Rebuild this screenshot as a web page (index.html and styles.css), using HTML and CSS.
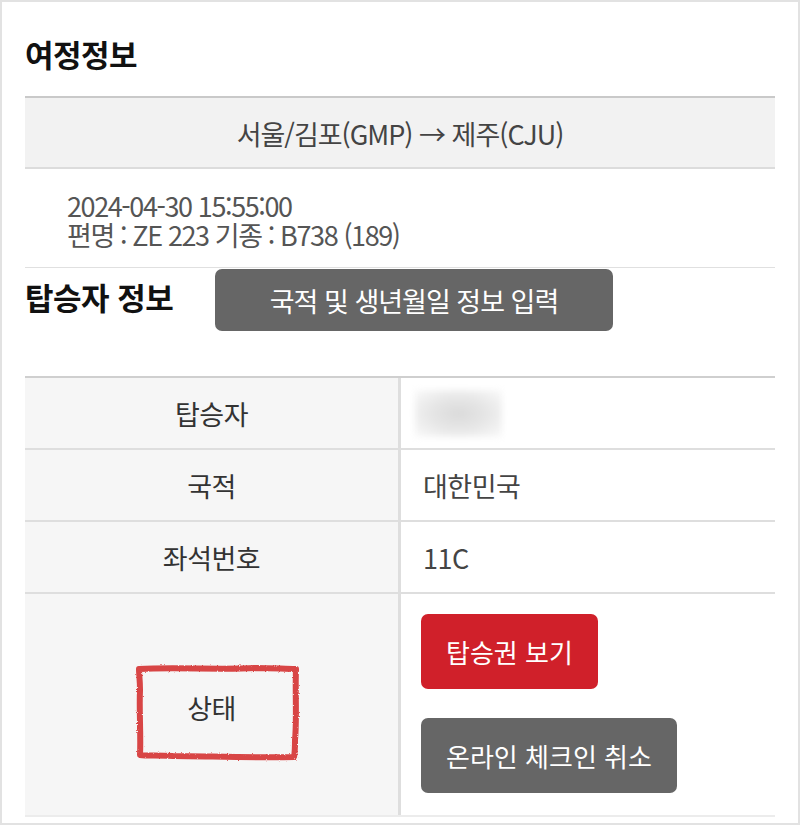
FILE: index.html
```html
<!DOCTYPE html>
<html lang="ko">
<head>
<meta charset="utf-8">
<title>여정정보</title>
<link rel="stylesheet" href="styles.css">
</head>
<body>
<div class="frame">
  <h2 class="section-title trip-title">여정정보</h2>
  <div class="route">서울/김포(GMP) → 제주(CJU)</div>
  <div class="flight">
    <div>2024-04-30 15:55:00</div>
    <div>편명 : ZE 223 기종 : B738 (189)</div>
  </div>
  <div class="pax-head">
    <h2 class="section-title pax-title">탑승자 정보</h2>
    <button class="btn btn-gray btn-info">국적 및 생년월일 정보 입력</button>
  </div>
  <div class="table">
    <div class="cell label">탑승자</div>
    <div class="cell value"><span class="blur"></span></div>
    <div class="cell label">국적</div>
    <div class="cell value">대한민국</div>
    <div class="cell label">좌석번호</div>
    <div class="cell value">11C</div>
    <div class="cell label status">
      상태
      <svg class="mark" width="170" height="105" viewBox="0 0 170 105">
        <defs>
          <filter id="rough" x="-10%" y="-10%" width="120%" height="120%">
            <feTurbulence type="fractalNoise" baseFrequency="0.9" numOctaves="2" seed="3"/>
            <feDisplacementMap in="SourceGraphic" scale="2.4"/>
          </filter>
        </defs>
        <path d="M6 9 C40 7 90 10 122 8 C140 8 152 9 163 9 C162 30 164 60 162 80 C162 88 162 92 161 97 C120 98 70 96 40 96 C25 95 14 96 7 95 C8 75 6 50 7 30 C7 20 6 14 6 9 Z" fill="none" stroke="#d84444" stroke-width="6" stroke-linejoin="round" filter="url(#rough)"/>
      </svg>
    </div>
    <div class="cell actions">
      <button class="btn btn-red btn-act">탑승권 보기</button>
      <button class="btn btn-gray btn-act">온라인 체크인 취소</button>
    </div>
  </div>
</div>
</body>
</html>
```
FILE: styles.css
```css
* { box-sizing: border-box; }
html, body { margin: 0; padding: 0; background: #fff; }
body {
  font-family: "Noto Sans CJK KR", "Noto Sans", sans-serif;
  color: #333;
}
.frame {
  width: 800px;
  height: 825px;
  border: 2px solid #e2e2e2;
  padding: 0 23px;
  overflow: hidden;
}
.section-title {
  margin: 0;
  font-weight: 700;
  color: #111;
  letter-spacing: -0.5px;
}
.trip-title {
  font-size: 31px;
  line-height: 40px;
  margin-top: 32px;
}
.route {
  margin-top: 22px;
  height: 73px;
  padding-top: 5px;
  border-top: 2px solid #c9c9c9;
  border-bottom: 2px solid #dcdcdc;
  background: #f2f2f2;
  text-align: center;
  font-size: 27px;
  line-height: 62px;
  color: #444;
  letter-spacing: -1px;
}
.flight {
  padding: 22px 0 18px 42px;
  font-size: 27px;
  line-height: 29px;
  color: #555;
  letter-spacing: -1.4px;
  border-bottom: 1px solid #e0e0e0;
}
.pax-head {
  display: flex;
  align-items: flex-start;
  padding-top: 1px;
}
.pax-title {
  flex: 0 0 190px;
  font-size: 31px;
  line-height: 40px;
  margin-top: 8px;
}
.btn {
  border: 0;
  color: #fff;
  font-family: inherit;
  border-radius: 7px;
  padding: 0;
  cursor: pointer;
}
.btn-gray { background: #666; }
.btn-red { background: #d0202a; }
.btn-info {
  width: 398px;
  height: 62px;
  font-size: 27px;
  letter-spacing: -1px;
}
.table {
  margin-top: 45px;
  display: grid;
  grid-template-columns: 376px 1fr;
  grid-template-rows: 72px 72px 72px 221px;
  border-top: 2px solid #cfcfcf;
  border-bottom: 2px solid #ececec;
}
.cell {
  display: flex;
  align-items: center;
  font-size: 27px;
  border-bottom: 2px solid #dedede;
}
.cell:nth-last-child(-n+2) { border-bottom: 0; }
.label {
  justify-content: center;
  background: #f6f6f6;
  border-right: 3px solid #dedede;
  color: #333;
  letter-spacing: -0.5px;
}
.value {
  padding-left: 22px;
  color: #444;
  letter-spacing: -0.5px;
}
.blur {
  display: block;
  width: 87px;
  height: 47px;
  background: radial-gradient(ellipse at center, #dadada 0%, #e6e6e6 45%, #f3f3f3 80%, #fafafa 100%);
  filter: blur(3px);
  margin-left: -8px;
}
.status {
  position: relative;
  padding-top: 6px;
}
.mark {
  position: absolute;
  left: 108px;
  top: 66px;
}
.actions {
  flex-direction: column;
  align-items: flex-start;
  justify-content: flex-start;
  padding: 20px 0 0 20px;
  gap: 29px;
}
.btn-act {
  height: 75px;
  padding: 0 25px;
  font-size: 26px;
  letter-spacing: 0;
}
```
